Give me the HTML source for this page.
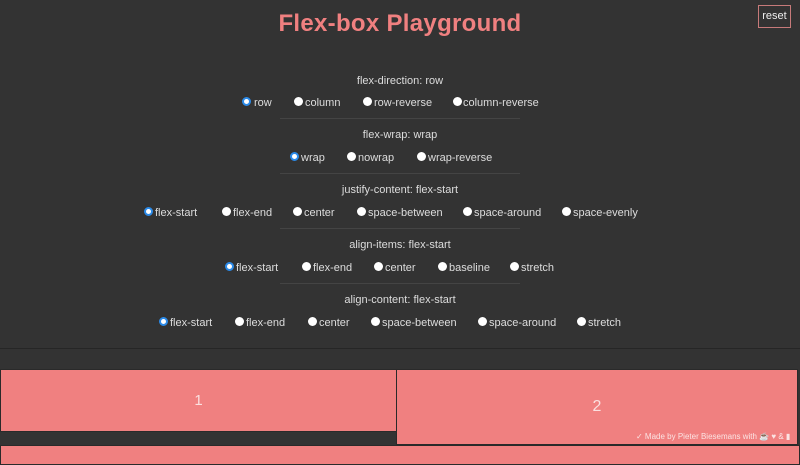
<!DOCTYPE html>
<html><head><meta charset="utf-8"><style>
*{margin:0;padding:0;box-sizing:border-box}
body{width:800px;height:450px;background:#333;overflow:hidden;position:relative;font-family:"Liberation Sans",sans-serif;color:#e6e6e6}
h1{position:absolute;top:10px;left:0;width:800px;text-align:center;font-size:24px;font-weight:bold;color:#f08080;letter-spacing:0.3px}
.reset{position:absolute;left:758px;top:5px;width:33px;height:23px;border:1px solid #c77a7a;color:#eee;font-size:11px;text-align:center;line-height:21px}
.h{position:absolute;left:0;width:800px;text-align:center;font-size:11px;color:#ddd}
.hr{position:absolute;left:280px;width:240px;height:1px;background:#444}
.r{position:absolute;width:9px;height:9px;border-radius:50%;background:#fff}
.r.s{background:#fff;border:2px solid #2b8ae8}
.t{position:absolute;font-size:11px;color:#ddd;white-space:nowrap}
.sep{position:absolute;left:0;top:348px;width:800px;height:1px;background:#262626}
.b{position:absolute;background:#f08080;border:1px solid #2a2a2a;color:#fbe0e0;text-align:center}
.foot{position:absolute;left:636px;top:432px;font-size:8px;color:#fbe3e3;white-space:nowrap}
</style></head><body>
<h1>Flex-box Playground</h1>
<div class="reset">reset</div>

<div class="h" style="top:75px">flex-direction: row</div>
<div class="h" style="top:129px">flex-wrap: wrap</div>
<div class="h" style="top:184px">justify-content: flex-start</div>
<div class="h" style="top:239px">align-items: flex-start</div>
<div class="h" style="top:294px">align-content: flex-start</div>
<div class="hr" style="top:118px"></div>
<div class="hr" style="top:173px"></div>
<div class="hr" style="top:228px"></div>
<div class="hr" style="top:283px"></div>

<div class="r s" style="left:242px;top:97px"></div><div class="t" style="left:254px;top:97px">row</div>
<div class="r" style="left:294px;top:97px"></div><div class="t" style="left:305px;top:97px">column</div>
<div class="r" style="left:363px;top:97px"></div><div class="t" style="left:374px;top:97px">row-reverse</div>
<div class="r" style="left:453px;top:97px"></div><div class="t" style="left:463px;top:97px">column-reverse</div>

<div class="r s" style="left:290px;top:152px"></div><div class="t" style="left:301px;top:152px">wrap</div>
<div class="r" style="left:347px;top:152px"></div><div class="t" style="left:358px;top:152px">nowrap</div>
<div class="r" style="left:417px;top:152px"></div><div class="t" style="left:428px;top:152px">wrap-reverse</div>

<div class="r s" style="left:144px;top:207px"></div><div class="t" style="left:155px;top:207px">flex-start</div>
<div class="r" style="left:222px;top:207px"></div><div class="t" style="left:233px;top:207px">flex-end</div>
<div class="r" style="left:293px;top:207px"></div><div class="t" style="left:304px;top:207px">center</div>
<div class="r" style="left:357px;top:207px"></div><div class="t" style="left:368px;top:207px">space-between</div>
<div class="r" style="left:463px;top:207px"></div><div class="t" style="left:474px;top:207px">space-around</div>
<div class="r" style="left:562px;top:207px"></div><div class="t" style="left:573px;top:207px">space-evenly</div>

<div class="r s" style="left:225px;top:262px"></div><div class="t" style="left:236px;top:262px">flex-start</div>
<div class="r" style="left:302px;top:262px"></div><div class="t" style="left:313px;top:262px">flex-end</div>
<div class="r" style="left:374px;top:262px"></div><div class="t" style="left:385px;top:262px">center</div>
<div class="r" style="left:438px;top:262px"></div><div class="t" style="left:449px;top:262px">baseline</div>
<div class="r" style="left:510px;top:262px"></div><div class="t" style="left:521px;top:262px">stretch</div>

<div class="r s" style="left:159px;top:317px"></div><div class="t" style="left:170px;top:317px">flex-start</div>
<div class="r" style="left:235px;top:317px"></div><div class="t" style="left:246px;top:317px">flex-end</div>
<div class="r" style="left:308px;top:317px"></div><div class="t" style="left:319px;top:317px">center</div>
<div class="r" style="left:371px;top:317px"></div><div class="t" style="left:382px;top:317px">space-between</div>
<div class="r" style="left:478px;top:317px"></div><div class="t" style="left:489px;top:317px">space-around</div>
<div class="r" style="left:577px;top:317px"></div><div class="t" style="left:588px;top:317px">stretch</div>

<div class="sep"></div>
<div class="b" style="left:0;top:369px;width:397px;height:63px;line-height:61px;font-size:15px">1</div>
<div class="b" style="left:396px;top:369px;width:402px;height:76px;line-height:74px;font-size:16px">2</div>
<div class="b" style="left:0;top:445px;width:800px;height:20px"></div>
<div class="foot">✓ Made by Pieter Biesemans with ☕ ♥ &amp; ▮</div>
</body></html>
